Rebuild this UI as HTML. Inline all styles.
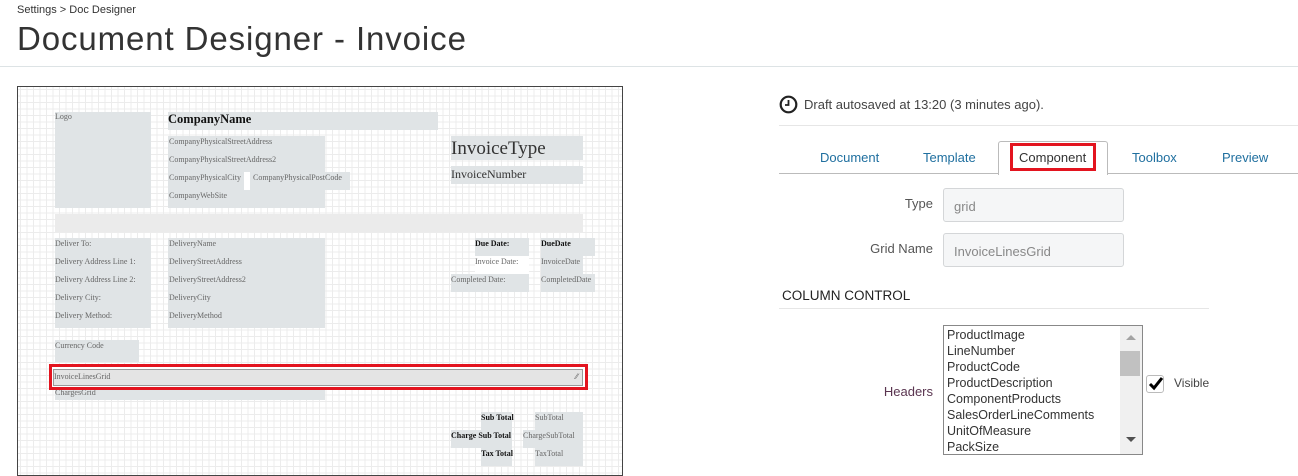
<!DOCTYPE html>
<html><head><meta charset="utf-8"><style>
*{margin:0;padding:0;box-sizing:border-box}
body{width:1298px;height:464px;overflow:hidden;background:#fff;font-family:"Liberation Sans",sans-serif;position:relative;color:#333}
.a{position:absolute}
.canvas{left:17px;top:86px;width:606px;height:390px;border:1px solid #444;
background-color:#fff;
background-image:linear-gradient(#ececec 1px,transparent 1px),linear-gradient(90deg,#ececec 1px,transparent 1px);
background-size:6.5px 6.5px;background-position:2px 2px}
.b{position:absolute;background:#e0e4e6;font-family:"Liberation Serif",serif;font-size:8px;color:#666;line-height:10px;white-space:nowrap}
.s{position:absolute;font-family:"Liberation Serif",serif;font-size:8px;color:#666;white-space:nowrap}
.bold{font-weight:bold;color:#111}
.tab{position:absolute;top:150px;font-size:13px;color:#1f6f9f}
.lbl{position:absolute;font-size:13px;color:#555;text-align:right;width:150px;left:783px}
.inp{position:absolute;left:943px;width:181px;height:34px;background:#f5f6f7;border:1px solid #d4d6d8;border-radius:3px;font-size:13px;color:#888;padding:10px 10px}
.li{font-size:12.5px;line-height:16px;color:#333;white-space:nowrap}
</style></head><body>
<div class="a" style="left:17px;top:4px;font-size:11px;color:#333">Settings &gt; Doc Designer</div>
<div class="a" style="left:17px;top:20px;font-size:33px;color:#333;letter-spacing:0.9px">Document Designer - Invoice</div>
<div class="a" style="left:0;top:66px;width:1298px;height:1px;background:#dde3e5"></div>

<div class="a canvas"></div>
<div class="b" style="left:55px;top:112px;width:96px;height:96px">Logo</div>
<div class="b bold" style="left:168px;top:112px;width:270px;height:18px;font-size:12.5px;padding-top:2px">CompanyName</div>
<div class="b" style="left:168px;top:136px;width:157px;height:72px"></div>
<div class="a" style="left:244px;top:172px;width:6px;height:18px;background:#fff"></div>
<div class="b" style="left:250px;top:172px;width:100px;height:18px"></div>
<div class="s" style="left:169px;top:137px">CompanyPhysicalStreetAddress</div>
<div class="s" style="left:169px;top:155px">CompanyPhysicalStreetAddress2</div>
<div class="s" style="left:169px;top:173px">CompanyPhysicalCity</div>
<div class="s" style="left:253px;top:173px">CompanyPhysicalPostCode</div>
<div class="s" style="left:169px;top:191px">CompanyWebSite</div>
<div class="b" style="left:451px;top:136px;width:132px;height:24px;font-size:19px;line-height:26px;color:#333">InvoiceType</div>
<div class="b" style="left:451px;top:166px;width:132px;height:18px;font-size:12px;line-height:16px;color:#333">InvoiceNumber</div>
<div class="a" style="left:55px;top:214px;width:528px;height:18px;background:#ebebeb"></div>

<div class="b" style="left:55px;top:238px;width:96px;height:90px"></div>
<div class="b" style="left:168px;top:238px;width:157px;height:90px"></div>
<div class="s" style="left:55px;top:239px">Deliver To:</div>
<div class="s" style="left:55px;top:257px">Delivery Address Line 1:</div>
<div class="s" style="left:55px;top:275px">Delivery Address Line 2:</div>
<div class="s" style="left:55px;top:293px">Delivery City:</div>
<div class="s" style="left:55px;top:311px">Delivery Method:</div>
<div class="s" style="left:169px;top:239px">DeliveryName</div>
<div class="s" style="left:169px;top:257px">DeliveryStreetAddress</div>
<div class="s" style="left:169px;top:275px">DeliveryStreetAddress2</div>
<div class="s" style="left:169px;top:293px">DeliveryCity</div>
<div class="s" style="left:169px;top:311px">DeliveryMethod</div>

<div class="b bold" style="left:475px;top:238px;width:54px;height:18px;padding-top:1px">Due Date:</div>
<div class="a" style="left:475px;top:256px;width:54px;height:18px;background:#fff"></div>
<div class="s" style="left:475px;top:257px">Invoice Date:</div>
<div class="b" style="left:451px;top:274px;width:78px;height:18px;padding-top:1px">Completed Date:</div>
<div class="b bold" style="left:541px;top:238px;width:54px;height:18px;padding-top:1px">DueDate</div>
<div class="b" style="left:541px;top:256px;width:42px;height:18px;padding-top:1px">InvoiceDate</div>
<div class="b" style="left:541px;top:274px;width:54px;height:18px;padding-top:1px">CompletedDate</div>

<div class="b" style="left:55px;top:340px;width:84px;height:22px;padding-top:1px">Currency Code</div>
<div class="b" style="left:55px;top:386px;width:270px;height:14px;padding-top:2px">ChargesGrid</div>
<div class="a" style="left:49px;top:364px;width:539px;height:26px;border:3px solid #e3141f;background:#fff"></div>
<div class="b" style="left:53px;top:369px;width:530px;height:17px;background:#e4e4e4;padding-top:2px;border:1px solid #999">InvoiceLinesGrid<span style="position:absolute;right:4px;top:2px;font-size:8px;color:#333">⁄⁄</span></div>

<div class="b bold" style="left:481px;top:412px;width:31px;height:18px;padding-top:1px">Sub Total</div>
<div class="b" style="left:535px;top:412px;width:48px;height:18px;padding-top:1px">SubTotal</div>
<div class="b bold" style="left:451px;top:430px;width:61px;height:18px;padding-top:1px">Charge Sub Total</div>
<div class="b" style="left:523px;top:430px;width:60px;height:18px;padding-top:1px">ChargeSubTotal</div>
<div class="b bold" style="left:481px;top:448px;width:31px;height:18px;padding-top:1px">Tax Total</div>
<div class="b" style="left:535px;top:448px;width:48px;height:18px;padding-top:1px">TaxTotal</div>

<!-- right -->
<svg class="a" style="left:779px;top:95px" width="19" height="19" viewBox="0 0 19 19"><circle cx="9.5" cy="9.5" r="7.8" fill="none" stroke="#222" stroke-width="2.2"/><path d="M9.5 5v5H6" fill="none" stroke="#222" stroke-width="1.8"/></svg>
<div class="a" style="left:804px;top:97px;font-size:13px;color:#444">Draft autosaved at 13:20 (3 minutes ago).</div>
<div class="a" style="left:779px;top:125px;width:519px;height:1px;background:#e6e6e6"></div>

<div class="a" style="left:779px;top:173px;width:519px;height:1px;background:#bbb"></div>
<div class="a" style="left:998px;top:141px;width:110px;height:34px;border:1px solid #bbb;border-bottom:none;border-radius:3px 3px 0 0;background:#fff"></div>
<div class="a" style="left:1010px;top:143px;width:86px;height:28px;border:3px solid #e3141f"></div>
<div class="tab" style="left:820px">Document</div>
<div class="tab" style="left:923px">Template</div>
<div class="tab" style="left:1019px;color:#333">Component</div>
<div class="tab" style="left:1132px">Toolbox</div>
<div class="tab" style="left:1222px">Preview</div>

<div class="lbl" style="top:196px">Type</div>
<div class="inp" style="top:188px">grid</div>
<div class="lbl" style="top:241px">Grid Name</div>
<div class="inp" style="top:233px">InvoiceLinesGrid</div>

<div class="a" style="left:782px;top:288px;font-size:13.5px;color:#222">COLUMN CONTROL</div>
<div class="a" style="left:779px;top:308px;width:430px;height:1px;background:#e6e6e6"></div>

<div class="lbl" style="top:384px;color:#5a3550">Headers</div>
<div class="a" style="left:943px;top:325px;width:200px;height:130px;border:1px solid #888;background:#fff;overflow:hidden;padding:1px 0 0 3px">
<div class="li">ProductImage</div><div class="li">LineNumber</div><div class="li">ProductCode</div><div class="li">ProductDescription</div><div class="li">ComponentProducts</div><div class="li">SalesOrderLineComments</div><div class="li">UnitOfMeasure</div><div class="li">PackSize</div>
<div class="a" style="right:0;top:0;width:22px;height:128px;background:#f0f0f0"></div>
<div class="a" style="right:2px;top:25px;width:20px;height:25px;background:#c1c1c1"></div>
<div class="a" style="right:6px;top:9px;width:0;height:0;border-left:5px solid transparent;border-right:5px solid transparent;border-bottom:5px solid #a3a3a3"></div>
<div class="a" style="right:6px;top:111px;width:0;height:0;border-left:5px solid transparent;border-right:5px solid transparent;border-top:5px solid #505050"></div>
</div>
<div class="a" style="left:1146px;top:375px;width:18px;height:18px;border:1px solid #bbb;border-radius:3px;background:#fff"></div>
<svg class="a" style="left:1148px;top:376px" width="16" height="15" viewBox="0 0 16 15"><path d="M2 8l4 4 8-10" fill="none" stroke="#000" stroke-width="3"/></svg>
<div class="a" style="left:1174px;top:376px;font-size:12px;color:#444">Visible</div>
</body></html>
